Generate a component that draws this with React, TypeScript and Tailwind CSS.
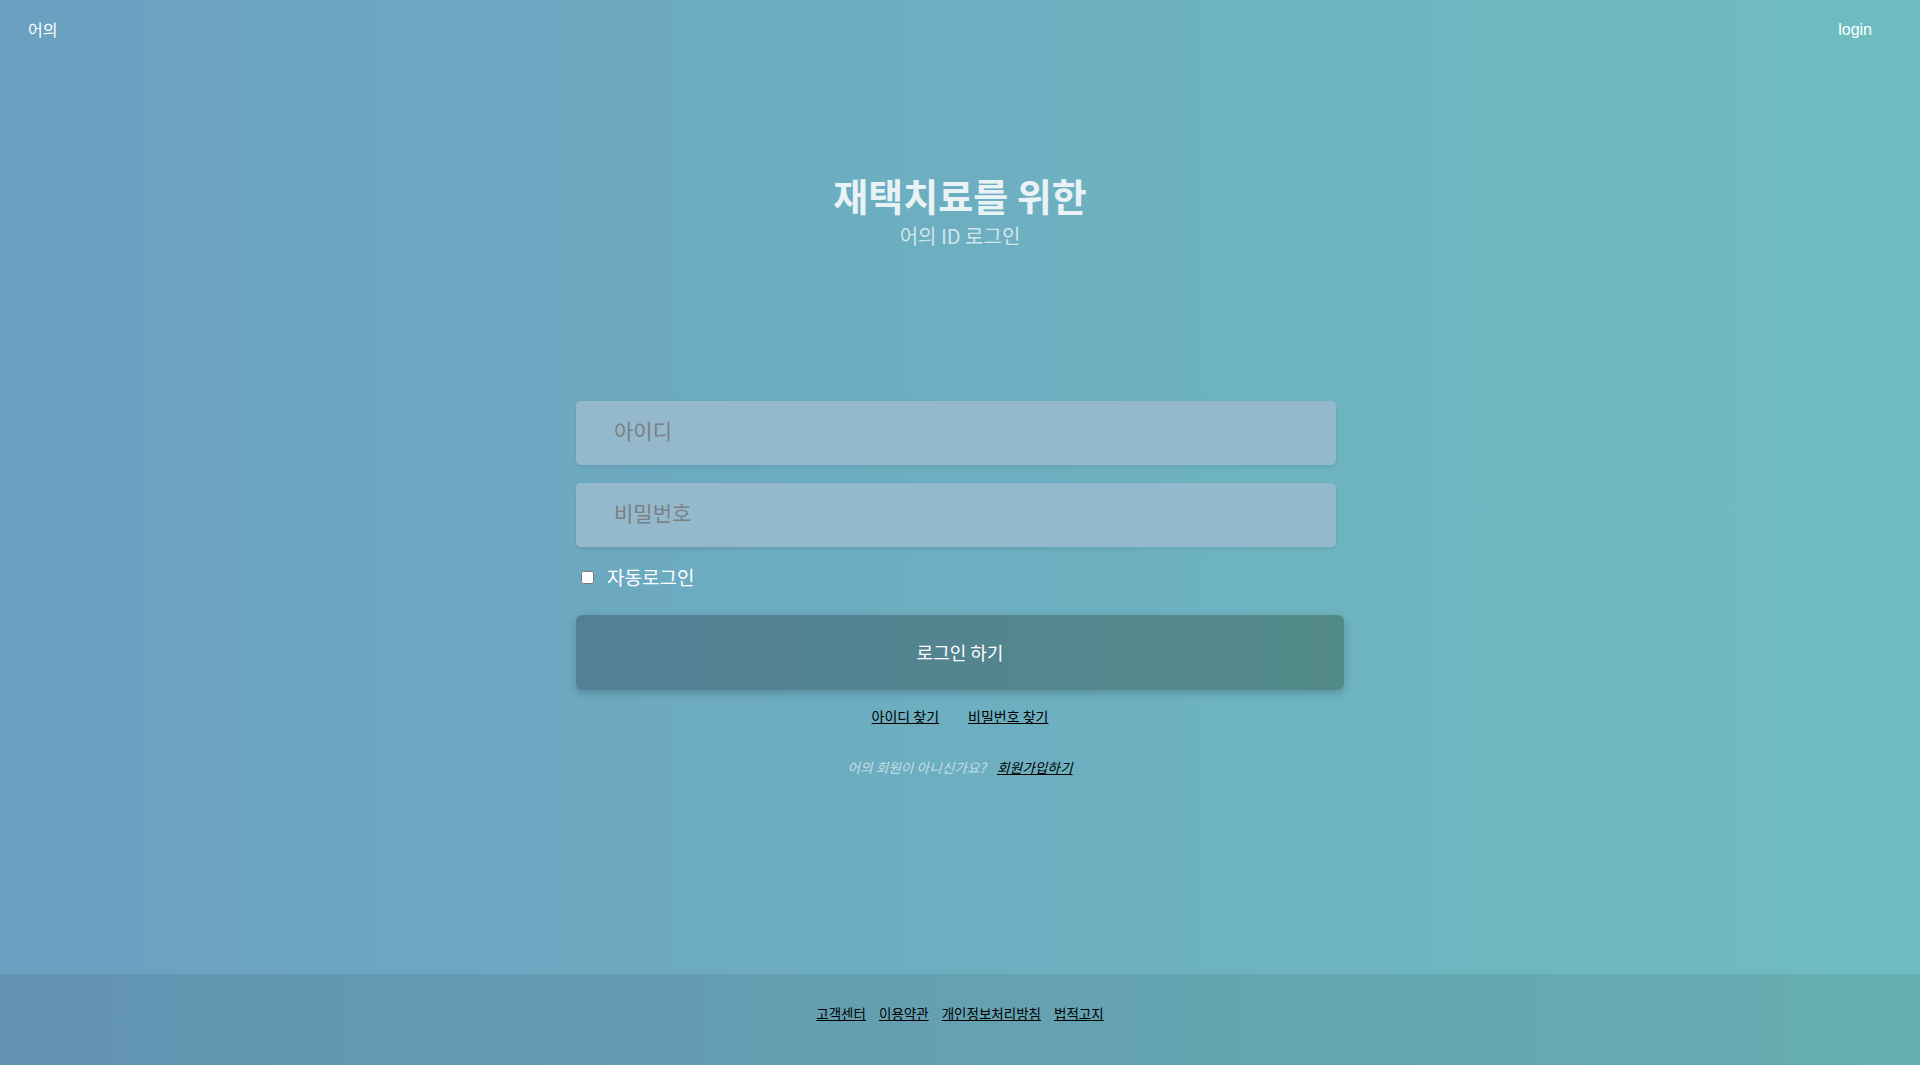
import { useState } from "react";

const kr = "font-['Noto_Sans_CJK_KR','Noto_Sans',sans-serif]";

export default function App() {
  const [auto, setAuto] = useState(false);

  return (
    <div
      className={`flex h-[1065px] w-full flex-col bg-gradient-to-r from-[#6ba0c1] to-[#6fbdc0] ${kr}`}
    >
      <header className="flex items-start justify-between pl-[28px] pr-[48px] pt-[17px]">
        <a href="#" className="text-[16px] leading-6 text-white">
          어의
        </a>
        <a
          href="#"
          className="pt-[1px] font-['Liberation_Sans',Arial,sans-serif] text-[16px] leading-6 text-white"
        >
          login
        </a>
      </header>

      <main className="flex flex-1 flex-col items-center">
        <h1 className="mt-[133px] text-[38px] font-bold leading-[40px] text-white/85">
          재택치료를 위한
        </h1>
        <p className="mt-[8px] text-[20px] leading-[26px] text-white/70">어의 ID 로그인</p>

        <form
          className="mt-[152px] flex w-[768px] flex-col"
          onSubmit={(e) => e.preventDefault()}
        >
          <input
            type="text"
            placeholder="아이디"
            className="h-[64px] w-[760px] rounded-[5px] bg-[#94b9cd] px-[38px] pb-[6px] text-[21px] text-gray-700 shadow-[0_2px_4px_rgba(0,0,0,0.08)] outline-none placeholder:text-[#7b8084]"
          />
          <input
            type="password"
            placeholder="비밀번호"
            className="mt-[18px] h-[64px] w-[760px] rounded-[5px] bg-[#94b9cd] px-[38px] pb-[6px] text-[21px] text-gray-700 shadow-[0_2px_4px_rgba(0,0,0,0.08)] outline-none placeholder:text-[#7b8084]"
          />
          <label className="mt-[18px] flex h-6 items-center gap-[13px] text-[19px] text-white">
            <input
              type="checkbox"
              checked={auto}
              onChange={(e) => setAuto(e.target.checked)}
              className="ml-[5px] h-[13px] w-[13px]"
            />
            자동로그인
          </label>
          <button
            type="submit"
            className="mt-[26px] h-[75px] w-[768px] rounded-[6px] bg-gradient-to-r from-[#547f96] to-[#528a88] text-[18px] text-white shadow-[0_3px_8px_rgba(0,0,0,0.2)]"
          >
            로그인 하기
          </button>
        </form>

        <div className="mt-[16px] flex gap-[29px] text-[14px] leading-5 text-black">
          <a href="#" className="underline">
            아이디 찾기
          </a>
          <a href="#" className="underline">
            비밀번호 찾기
          </a>
        </div>

        <div className="mt-[31px] flex gap-[11px] text-[13.7px] italic leading-5">
          <span className="text-white/60">어의 회원이 아니신가요?</span>
          <a href="#" className="text-black underline">
            회원가입하기
          </a>
        </div>
      </main>

      <footer className="flex h-[91px] items-start justify-center gap-[13px] bg-black/[0.08] pt-[29px] text-[13.5px] leading-5 text-black">
        <a href="#" className="underline">
          고객센터
        </a>
        <a href="#" className="underline">
          이용약관
        </a>
        <a href="#" className="underline">
          개인정보처리방침
        </a>
        <a href="#" className="underline">
          법적고지
        </a>
      </footer>
    </div>
  );
}
